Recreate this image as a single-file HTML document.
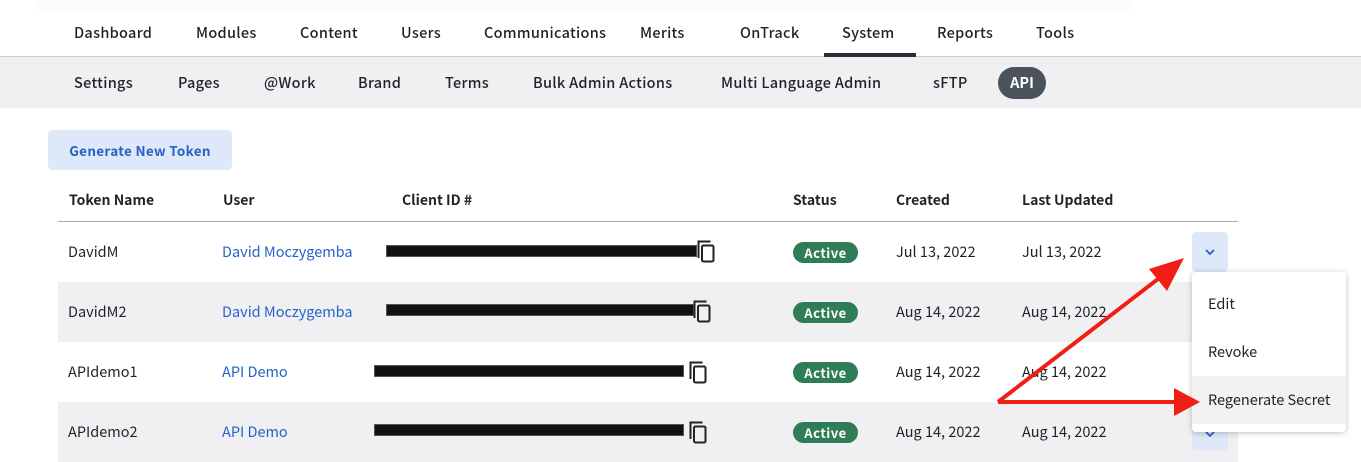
<!DOCTYPE html>
<html><head><meta charset="utf-8"><style>
*{margin:0;padding:0;box-sizing:border-box}
body{width:1361px;height:448px;overflow:hidden;background:#fff;font-family:"Noto Sans CJK JP","Liberation Sans",sans-serif;font-size:14px;color:#1f2328;position:relative}
.a{position:absolute;white-space:nowrap;line-height:20px}
.n{top:23px;font-size:14.5px;letter-spacing:0.3px;font-weight:500}
.s{top:73px;font-size:14.5px;letter-spacing:0.3px;font-weight:500}
.h{top:190px;font-weight:700}
.row{position:absolute;left:58px;width:1180px;height:60px}
.g{background:#f0f0f2}
.t{font-size:14.5px}
.u{color:#2563c9;font-size:14.5px}
.bar{position:absolute;height:12px;background:#111;border:1px solid #555}
.pill{position:absolute;left:793px;width:65px;height:21px;border-radius:11px;background:#2e7d57;color:#fff;font-weight:700;font-size:13px;text-align:center;line-height:21px;letter-spacing:0.5px}
.cp{position:absolute;width:18px;height:23px}
</style></head><body>
<div class="a" style="left:36px;top:0;width:1097px;height:10px;background:#fcfcfe"></div>
<div class="a n" style="left:74px">Dashboard</div>
<div class="a n" style="left:196px">Modules</div>
<div class="a n" style="left:300px">Content</div>
<div class="a n" style="left:401px">Users</div>
<div class="a n" style="left:484px">Communications</div>
<div class="a n" style="left:640px">Merits</div>
<div class="a n" style="left:740px">OnTrack</div>
<div class="a n" style="left:842px">System</div>
<div class="a n" style="left:937px">Reports</div>
<div class="a n" style="left:1036px">Tools</div>
<div class="a" style="left:0;top:56px;width:1361px;height:1px;background:#c8cfdc"></div>
<div class="a" style="left:0;top:57px;width:1361px;height:51px;background:#f0f0f2"></div>
<div class="a" style="left:824px;top:53px;width:92px;height:4px;background:#2a2d33"></div>
<div class="a s" style="left:74px">Settings</div>
<div class="a s" style="left:178px">Pages</div>
<div class="a s" style="left:264px">@Work</div>
<div class="a s" style="left:358px">Brand</div>
<div class="a s" style="left:445px">Terms</div>
<div class="a s" style="left:533px">Bulk Admin Actions</div>
<div class="a s" style="left:721px">Multi Language Admin</div>
<div class="a s" style="left:933px">sFTP</div>
<div class="a" style="left:998px;top:67px;width:48px;height:32px;border-radius:16px;background:#4a525c;color:#fff;font-weight:700;text-align:center;line-height:32px;font-size:14.5px">API</div>
<div class="a" style="left:48px;top:130px;width:184px;height:40px;border-radius:4px;background:#dde8f8;color:#2a5fc4;font-weight:700;font-size:13.5px;text-align:center;line-height:40px;letter-spacing:0.3px">Generate New Token</div>
<div class="a h" style="left:69px">Token Name</div>
<div class="a h" style="left:223px">User</div>
<div class="a h" style="left:402px">Client ID #</div>
<div class="a h" style="left:793px">Status</div>
<div class="a h" style="left:896px">Created</div>
<div class="a h" style="left:1022px">Last Updated</div>
<div class="a" style="left:58px;top:221px;width:1180px;height:1px;background:#a8adb4"></div>
<div class="row" style="top:222px"></div>
<div class="row g" style="top:282px"></div>
<div class="row" style="top:342px"></div>
<div class="row g" style="top:402px"></div>

<div class="a t" style="left:68px;top:242px">DavidM</div>
<div class="a u" style="left:222px;top:242px">David Moczygemba</div>
<div class="bar" style="left:386px;top:245px;width:311px"></div>
<svg class="cp" style="left:697px;top:240px" viewBox="0 0 18 23"><path d="M1.5 18V1.5h12" fill="none" stroke="#222" stroke-width="2"/><rect x="5" y="5.5" width="11.5" height="16" rx="1.5" fill="none" stroke="#222" stroke-width="2"/></svg>
<div class="pill" style="top:242px">Active</div>
<div class="a t" style="left:896px;top:242px">Jul 13, 2022</div>
<div class="a t" style="left:1022px;top:242px">Jul 13, 2022</div>

<div class="a t" style="left:68px;top:302px">DavidM2</div>
<div class="a u" style="left:222px;top:302px">David Moczygemba</div>
<div class="bar" style="left:386px;top:304px;width:308px"></div>
<svg class="cp" style="left:693px;top:300px" viewBox="0 0 18 23"><path d="M1.5 18V1.5h12" fill="none" stroke="#222" stroke-width="2"/><rect x="5" y="5.5" width="11.5" height="16" rx="1.5" fill="none" stroke="#222" stroke-width="2"/></svg>
<div class="pill" style="top:302px">Active</div>
<div class="a t" style="left:896px;top:302px">Aug 14, 2022</div>
<div class="a t" style="left:1022px;top:302px">Aug 14, 2022</div>

<div class="a t" style="left:68px;top:362px">APIdemo1</div>
<div class="a u" style="left:222px;top:362px">API Demo</div>
<div class="bar" style="left:374px;top:365px;width:310px"></div>
<svg class="cp" style="left:689px;top:361px" viewBox="0 0 18 23"><path d="M1.5 18V1.5h12" fill="none" stroke="#222" stroke-width="2"/><rect x="5" y="5.5" width="11.5" height="16" rx="1.5" fill="none" stroke="#222" stroke-width="2"/></svg>
<div class="pill" style="top:362px">Active</div>
<div class="a t" style="left:896px;top:362px">Aug 14, 2022</div>
<div class="a t" style="left:1022px;top:362px">Aug 14, 2022</div>

<div class="a t" style="left:68px;top:422px">APIdemo2</div>
<div class="a u" style="left:222px;top:422px">API Demo</div>
<div class="bar" style="left:374px;top:424px;width:310px"></div>
<svg class="cp" style="left:689px;top:421px" viewBox="0 0 18 23"><path d="M1.5 18V1.5h12" fill="none" stroke="#222" stroke-width="2"/><rect x="5" y="5.5" width="11.5" height="16" rx="1.5" fill="none" stroke="#222" stroke-width="2"/></svg>
<div class="pill" style="top:422px">Active</div>
<div class="a t" style="left:896px;top:422px">Aug 14, 2022</div>
<div class="a t" style="left:1022px;top:422px">Aug 14, 2022</div>

<div class="a" style="left:1192px;top:232px;width:36px;height:40px;border-radius:4px;background:#dde8f8"></div>
<svg class="a" style="left:1204px;top:248px" width="12" height="8" viewBox="0 0 12 8"><path d="M2 2l4 4 4-4" fill="none" stroke="#2a5fc4" stroke-width="1.8"/></svg>
<div class="a" style="left:1192px;top:420px;width:36px;height:30px;border-radius:4px;background:#dde8f8"></div>
<svg class="a" style="left:1204px;top:430px" width="12" height="8" viewBox="0 0 12 8"><path d="M2 2l4 4 4-4" fill="none" stroke="#2a5fc4" stroke-width="1.8"/></svg>

<div class="a" style="left:1192px;top:272px;width:154px;height:160px;background:#fff;border-radius:4px;box-shadow:0 1px 6px rgba(0,0,0,.25)"></div>
<div class="a" style="left:1192px;top:376px;width:154px;height:48px;background:#f2f2f3"></div>
<div class="a t" style="left:1208px;top:294px">Edit</div>
<div class="a t" style="left:1208px;top:342px">Revoke</div>
<div class="a t" style="left:1208px;top:390px">Regenerate Secret</div>

<svg class="a" style="left:0;top:0" width="1361" height="448" viewBox="0 0 1361 448">
<path d="M998 402L1158 279M998 402H1176" stroke="#f01e14" stroke-width="4" fill="none"/>
<path d="M1184 258L1149 269L1167 291Z" fill="#f01e14"/>
<path d="M1200 402L1174 388V416Z" fill="#f01e14"/>
</svg>
</body></html>
